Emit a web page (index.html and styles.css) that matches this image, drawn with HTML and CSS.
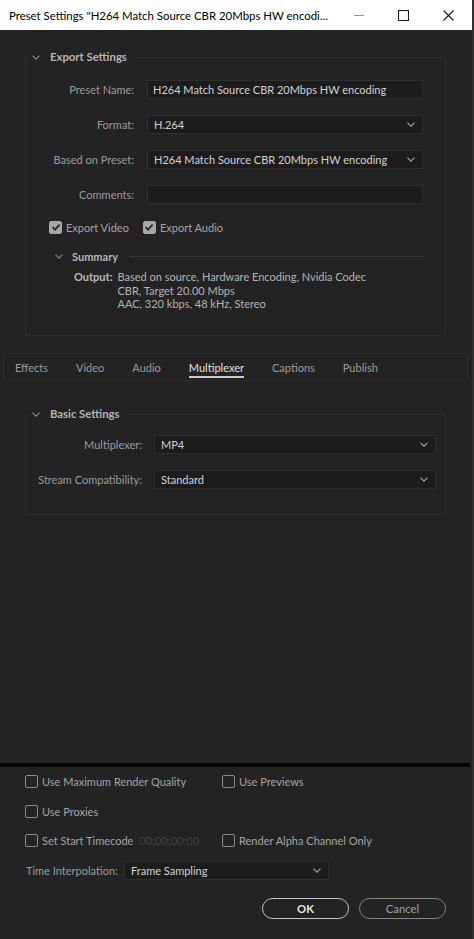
FILE: index.html
```html
<!DOCTYPE html>
<html>
<head>
<meta charset="utf-8">
<link rel="stylesheet" href="styles.css">
</head>
<body>
<div class="window">
  <div class="titlebar">
    <div class="title">Preset Settings "H264 Match Source CBR 20Mbps HW encodi...</div>
    <div class="winbtns">
      <span class="wb"><svg width="10" height="10" viewBox="0 0 10 10"><path d="M0 5.5H10" stroke="#9a9a9a" stroke-width="1"/></svg></span>
      <span class="wb"><svg width="11" height="11" viewBox="0 0 11 11"><rect x="0.5" y="0.5" width="10" height="10" fill="none" stroke="#1a1a1a" stroke-width="1.1"/></svg></span>
      <span class="wb"><svg width="11" height="11" viewBox="0 0 11 11"><path d="M0.5 0.5L10.5 10.5M10.5 0.5L0.5 10.5" stroke="#1a1a1a" stroke-width="1.1"/></svg></span>
    </div>
  </div>

  <div class="content">
    <fieldset class="panel export">
      <legend class="legend"><svg class="chev" width="8" height="5" viewBox="0 0 8 5"><path d="M0.5 0.6L4 4.2L7.5 0.6" fill="none" stroke="#8c8c8c" stroke-width="1.1"/></svg><span>Export Settings</span></legend>
      <div class="form export-form">
        <label class="lbl">Preset Name:</label>
        <div class="field input">H264 Match Source CBR 20Mbps HW encoding</div>
        <label class="lbl">Format:</label>
        <div class="field select"><span>H.264</span><svg class="dd" width="8" height="5" viewBox="0 0 8 5"><path d="M0.5 0.6L4 4.2L7.5 0.6" fill="none" stroke="#a0a0a0" stroke-width="1.2"/></svg></div>
        <label class="lbl">Based on Preset:</label>
        <div class="field select"><span>H264 Match Source CBR 20Mbps HW encoding</span><svg class="dd" width="8" height="5" viewBox="0 0 8 5"><path d="M0.5 0.6L4 4.2L7.5 0.6" fill="none" stroke="#a0a0a0" stroke-width="1.2"/></svg></div>
        <label class="lbl">Comments:</label>
        <div class="field input"></div>
      </div>
      <div class="checks">
        <div class="chk"><span class="box on"><svg width="12" height="12" viewBox="0 0 12 12"><path d="M2.6 6.2L5 8.6L9.6 3.6" fill="none" stroke="#262626" stroke-width="1.8"/></svg></span><span>Export Video</span></div>
        <div class="chk"><span class="box on"><svg width="12" height="12" viewBox="0 0 12 12"><path d="M2.6 6.2L5 8.6L9.6 3.6" fill="none" stroke="#262626" stroke-width="1.8"/></svg></span><span>Export Audio</span></div>
      </div>
      <div class="summary-head">
        <svg class="chev" width="8" height="5" viewBox="0 0 8 5"><path d="M0.5 0.6L4 4.2L7.5 0.6" fill="none" stroke="#8c8c8c" stroke-width="1.1"/></svg>
        <span class="sum-title">Summary</span>
        <span class="sum-line"></span>
      </div>
      <div class="summary">
        <span class="out-lbl">Output:</span>
        <div class="out-txt">
          <div>Based on source, Hardware Encoding, Nvidia Codec</div>
          <div>CBR, Target 20.00 Mbps</div>
          <div>AAC, 320 kbps, 48 kHz, Stereo</div>
        </div>
      </div>
    </fieldset>

    <div class="tabs">
      <span class="tab">Effects</span>
      <span class="tab">Video</span>
      <span class="tab">Audio</span>
      <span class="tab active">Multiplexer</span>
      <span class="tab">Captions</span>
      <span class="tab">Publish</span>
    </div>

    <fieldset class="panel basic">
      <legend class="legend"><svg class="chev" width="8" height="5" viewBox="0 0 8 5"><path d="M0.5 0.6L4 4.2L7.5 0.6" fill="none" stroke="#8c8c8c" stroke-width="1.1"/></svg><span>Basic Settings</span></legend>
      <div class="form basic-form">
        <label class="lbl">Multiplexer:</label>
        <div class="field select"><span>MP4</span><svg class="dd" width="8" height="5" viewBox="0 0 8 5"><path d="M0.5 0.6L4 4.2L7.5 0.6" fill="none" stroke="#a0a0a0" stroke-width="1.2"/></svg></div>
        <label class="lbl">Stream Compatibility:</label>
        <div class="field select"><span>Standard</span><svg class="dd" width="8" height="5" viewBox="0 0 8 5"><path d="M0.5 0.6L4 4.2L7.5 0.6" fill="none" stroke="#a0a0a0" stroke-width="1.2"/></svg></div>
      </div>
    </fieldset>

    <div class="spacer"></div>
    <div class="divider"></div>

    <div class="bottom">
      <div class="brow r1">
        <div class="chk c1"><span class="box"></span><span>Use Maximum Render Quality</span></div>
        <div class="chk"><span class="box"></span><span>Use Previews</span></div>
      </div>
      <div class="brow r2">
        <div class="chk c1"><span class="box"></span><span>Use Proxies</span></div>
      </div>
      <div class="brow r3">
        <div class="chk c1"><span class="box"></span><span>Set Start Timecode</span><span class="tc">00;00;00;00</span></div>
        <div class="chk"><span class="box"></span><span>Render Alpha Channel Only</span></div>
      </div>
      <div class="brow r4">
        <span class="lbl ti">Time Interpolation:</span>
        <div class="field select ti-sel"><span>Frame Sampling</span><svg class="dd" width="8" height="5" viewBox="0 0 8 5"><path d="M0.5 0.6L4 4.2L7.5 0.6" fill="none" stroke="#a0a0a0" stroke-width="1.2"/></svg></div>
      </div>
      <div class="buttons">
        <button class="btn ok">OK</button>
        <button class="btn cancel">Cancel</button>
      </div>
    </div>
  </div>
</div>
</body>
</html>
```

FILE: styles.css
```css
* { box-sizing: border-box; }
html, body { margin: 0; padding: 0; background: #232323; }
body { font-family: Lato, "Open Sans", sans-serif; font-size: 11px; color: #a3a3a3; }

.window {
  width: 474px;
  height: 939px;
  display: flex;
  flex-direction: column;
  background: #232323;
  border-right: 2px solid #2f2f2f;
  overflow: hidden;
}

.titlebar {
  height: 30px;
  flex: none;
  background: #ffffff;
  display: flex;
  align-items: center;
  padding-left: 9px;
}
.title {
  flex: 1;
  min-width: 0;
  font-family: Lato, "Open Sans", sans-serif;
  font-size: 11.4px;
  color: #000;
  white-space: nowrap;
  overflow: hidden;
}
.winbtns { display: flex; align-items: center; height: 30px; flex: none; padding-right: 1px; }
.wb { width: 45px; height: 30px; display: flex; align-items: center; justify-content: center; }

.content { flex: 1; display: flex; flex-direction: column; }

.panel {
  border: 1px solid #2f2f2f;
  border-radius: 2px;
  margin: 0;
  padding: 0;
  min-width: 0;
}
.legend {
  display: flex;
  align-items: center;
  gap: 10px;
  margin-left: 3px;
  padding: 0 9px 0 3px;
  font-weight: bold;
  color: #b5b5b5;
  font-size: 11.3px;
  line-height: 16px;
}
.chev { display: block; }

.export { margin: 19px 26px 0 25px; padding-bottom: 24px; }
.basic { margin: 25px 26px 0 25px; padding-bottom: 25px; }

.form { display: grid; align-items: center; }
.export-form {
  grid-template-columns: 108px 276px;
  column-gap: 13px;
  row-gap: 16px;
  padding-top: 15px;
}
.basic-form {
  grid-template-columns: 116px 282px;
  column-gap: 12px;
  row-gap: 16px;
  padding-top: 13px;
}
.lbl { text-align: right; color: #9c9c9c; white-space: nowrap; }

.field {
  height: 19px;
  background: #1c1c1c;
  border: 1px solid #2e2e2e;
  color: #d2d2d2;
  display: flex;
  align-items: center;
  padding: 0 7px 0 5px;
  white-space: nowrap;
}
.select { justify-content: space-between; padding-left: 6px; }
.dd { flex: none; }

.checks {
  display: flex;
  gap: 14px;
  padding: 17px 0 0 23px;
  height: 29px;
}
.chk { display: flex; align-items: center; gap: 4px; white-space: nowrap; color: #a3a3a3; }
.box {
  width: 13px;
  height: 13px;
  border: 1.5px solid #8a8a8a;
  border-radius: 2px;
  flex: none;
  display: flex;
  align-items: center;
  justify-content: center;
}
.box.on { background: #a6a6a6; border-color: #a6a6a6; }
.box.on svg { flex: none; }

.summary-head {
  display: flex;
  align-items: center;
  padding: 12px 21px 0 29px;
  height: 34px;
}
.sum-title { font-weight: bold; color: #b5b5b5; margin-left: 9px; }
.sum-line { flex: 1; height: 1px; background: #363636; margin-left: 11px; }

.summary {
  display: flex;
  gap: 5px;
  padding-left: 48px;
  padding-top: 3px;
  line-height: 13.7px;
  color: #b3b3b3;
}
.out-lbl { font-weight: bold; color: #b8b8b8; }

.tabs {
  margin: 17px 4px 0 3px;
  height: 28px;
  border: 1px solid #2d2d2d;
  display: flex;
  align-items: stretch;
  gap: 28px;
  padding-left: 11px;
}
.tab {
  display: flex;
  align-items: center;
  color: #9c9c9c;
  position: relative;
  padding-top: 1px;
}
.tab.active { color: #e2e2e2; }
.tab.active::after {
  content: "";
  position: absolute;
  left: 0;
  right: 0;
  bottom: 2px;
  height: 2px;
  background: #cfcfcf;
}

.spacer { flex: 1; }
.divider { height: 4px; background: #050505; margin-right: 2px; flex: none; }

.bottom {
  flex: none;
  height: 172px;
  padding: 4px 0 0 25px;
  display: flex;
  flex-direction: column;
}
.brow { display: flex; align-items: center; height: 20px; }
.r2 { margin-top: 10px; }
.r3 { margin-top: 9px; }
.r4 { margin-top: 11px; height: 19px; }
.c1 { width: 197px; }
.tc { color: #424242; margin-left: 2px; }
.ti { text-align: left; margin-left: 1px; width: 98px; }
.ti-sel { width: 205px; }

.buttons {
  margin-top: 18px;
  display: flex;
  justify-content: flex-end;
  gap: 10px;
  padding-right: 26px;
}
.btn {
  width: 87px;
  height: 21px;
  border-radius: 11px;
  background: transparent;
  font-family: Lato, "Open Sans", sans-serif;
  font-size: 11.3px;
  padding: 0;
}
.ok { border: 1.5px solid #c4c4c4; color: #e6e6e6; font-weight: bold; }
.cancel { border: 1.5px solid #848484; color: #a0a0a0; }
```
